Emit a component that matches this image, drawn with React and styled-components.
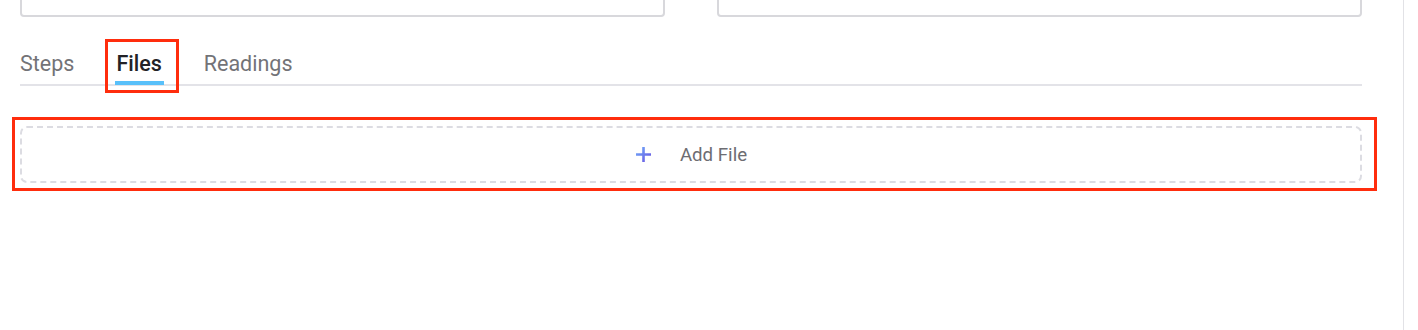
import React from "react";
import styled, { createGlobalStyle, css } from "styled-components";

const GlobalStyle = createGlobalStyle`
  html, body {
    margin: 0;
    padding: 0;
    background: #ffffff;
  }
  body {
    font-family: Roboto, "Noto Sans", "Liberation Sans", sans-serif;
    -webkit-font-smoothing: antialiased;
  }
  * { box-sizing: border-box; }
`;

const Page = styled.div`
  display: flex;
  height: 330px;
  overflow: hidden;
  background: #fff;
`;

const Panel = styled.main`
  width: 1404px;
  flex: none;
  height: 100%;
  border-right: 1px solid #e2e2e6;
  padding: 0 41px 0 20px;
  display: flex;
  flex-direction: column;
`;

const FieldsRow = styled.div`
  display: grid;
  grid-template-columns: 1fr 1fr;
  column-gap: 52px;
  margin-top: -27px;
`;

const Field = styled.div`
  height: 44px;
  border: 2px solid #d8d8dc;
  border-radius: 4px;
  background: #fff;
`;

const TabList = styled.nav`
  display: flex;
  align-items: flex-end;
  gap: 42px;
  margin-top: 34px;
  border-bottom: 2px solid #e3e3e8;
`;

const annotation = css`
  &::before {
    content: "";
    position: absolute;
    border: 3px solid #ff2d0d;
    pointer-events: none;
  }
`;

const Tab = styled.button`
  position: relative;
  appearance: none;
  background: none;
  border: none;
  margin: 0;
  padding: 0 0 8px;
  font-family: Roboto, "Noto Sans", sans-serif;
  font-size: 21.5px;
  line-height: 25px;
  font-weight: ${(p) => (p.$active ? 500 : 400)};
  color: ${(p) => (p.$active ? "#222226" : "#737377")};
  cursor: pointer;

  ${(p) =>
    p.$active &&
    css`
      &::after {
        content: "";
        position: absolute;
        left: -1px;
        right: -2px;
        bottom: -1px;
        height: 4px;
        background: #58c0fa;
      }
    `}

  ${(p) =>
    p.$annotated &&
    css`
      ${annotation}
      &::before {
        top: -12px;
        left: -11px;
        right: -17px;
        bottom: -9px;
      }
    `}
`;

const AddFileButton = styled.button`
  position: relative;
  appearance: none;
  margin-top: 40px;
  height: 57px;
  width: 100%;
  background: #fff;
  border: 2px dashed #dcdce2;
  border-radius: 7px;
  display: flex;
  align-items: center;
  justify-content: center;
  gap: 28px;
  font-family: Roboto, "Noto Sans", sans-serif;
  font-size: 18.7px;
  color: #6d6d72;
  cursor: pointer;

  ${(p) =>
    p.$annotated &&
    css`
      ${annotation}
      &::before {
        top: -11px;
        left: -10px;
        right: -17px;
        bottom: -10px;
      }
    `}
`;

const PlusIcon = () => (
  <svg width="17" height="17" viewBox="0 0 17 17" aria-hidden="true">
    <defs>
      <linearGradient id="plusGrad" x1="0" y1="0" x2="1" y2="1">
        <stop offset="0" stopColor="#6fb0fb" />
        <stop offset="1" stopColor="#6a4fe0" />
      </linearGradient>
    </defs>
    <path
      d="M8.5 1v15M1 8.5h15"
      stroke="url(#plusGrad)"
      strokeWidth="2.6"
      fill="none"
    />
  </svg>
);

export default function App() {
  return (
    <>
      <GlobalStyle />
      <Page>
        <Panel>
          <FieldsRow>
            <Field />
            <Field />
          </FieldsRow>
          <TabList>
            <Tab>Steps</Tab>
            <Tab $active $annotated>
              Files
            </Tab>
            <Tab>Readings</Tab>
          </TabList>
          <AddFileButton $annotated>
            <PlusIcon />
            <span>Add File</span>
          </AddFileButton>
        </Panel>
      </Page>
    </>
  );
}
